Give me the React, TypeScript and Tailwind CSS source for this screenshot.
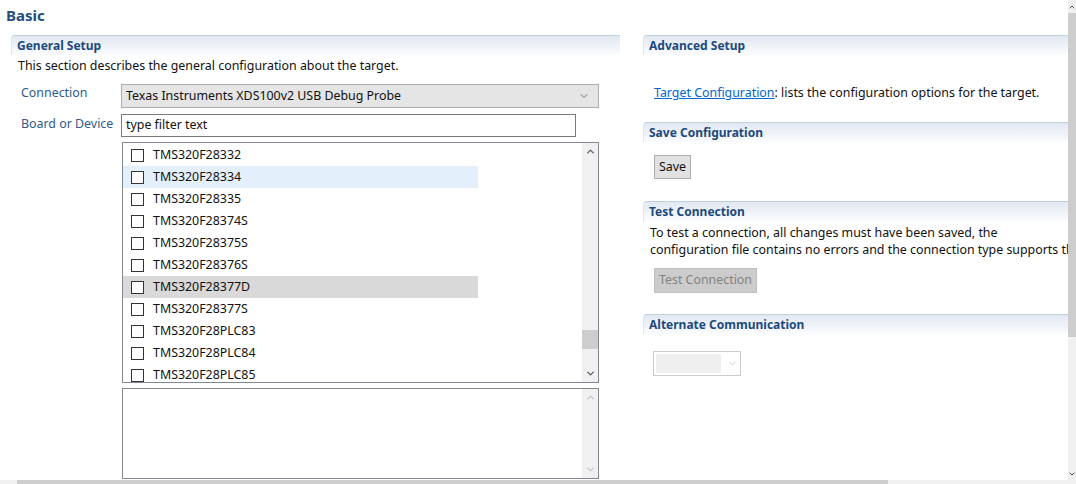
import { ChevronDown, ChevronUp } from 'lucide-react'

const devices = [
  'TMS320F28332',
  'TMS320F28334',
  'TMS320F28335',
  'TMS320F28374S',
  'TMS320F28375S',
  'TMS320F28376S',
  'TMS320F28377D',
  'TMS320F28377S',
  'TMS320F28PLC83',
  'TMS320F28PLC84',
  'TMS320F28PLC85',
]

function SectionHeader({ title }: { title: string }) {
  return (
    <div className="h-[20px] rounded-tl-[4px] border-t border-l border-t-[#c2d0de] border-l-[#dde5ee] bg-linear-to-b from-[#e1e8f2] to-[#fbfcfe] pl-[5px] text-[12px] leading-[19px] font-bold text-[#1c4a7d]">
      {title}
    </div>
  )
}

function ScrollArrow({ dir, muted }: { dir: 'up' | 'down'; muted?: boolean }) {
  const Icon = dir === 'up' ? ChevronUp : ChevronDown
  return (
    <div className="flex h-[17px] items-center justify-center">
      <Icon className={muted ? 'h-[11px] w-[11px] text-[#c4c4c4]' : 'h-[11px] w-[11px] text-[#555]'} strokeWidth={2.6} />
    </div>
  )
}

function DeviceRow({ name, index }: { name: string; index: number }) {
  const bg = index === 1 ? 'bg-[#e3f0fb]' : index === 6 ? 'bg-[#d9d9d9]' : 'bg-white'
  return (
    <div className={`flex h-[22px] w-[355px] shrink-0 items-center ${bg}`}>
      <span className="ml-[8px] h-[13px] w-[13px] shrink-0 border border-[#333] bg-white" />
      <span className="ml-[9px] text-[#111]">{name}</span>
    </div>
  )
}

export default function App() {
  return (
    <div className="flex h-[484px] w-[1076px] flex-col overflow-hidden bg-white font-['Noto_Sans','Liberation_Sans',sans-serif] text-[12.4px] text-[#111]">
      <div className="flex min-h-0 flex-1">
        <main className="min-w-0 flex-1 overflow-hidden">
          <div className="h-[35px] pt-[4px] pl-[6px] text-[15px] leading-[22px] font-bold text-[#1e4e82]">Basic</div>

          <div className="flex gap-[23px] pl-[11px]">
            {/* General Setup */}
            <section className="w-[609px] shrink-0">
              <SectionHeader title="General Setup" />
              <p className="mt-[3px] pl-[7px] leading-[16px]">This section describes the general configuration about the target.</p>

              <div className="mt-[10px] flex items-start">
                <span className="w-[110px] shrink-0 pt-[1px] pl-[10px] leading-[16px] text-[#2f5a8b]">Connection</span>
                <div className="flex h-[24px] w-[478px] items-center justify-between border border-[#adadad] bg-[#e5e5e5] pr-[8px] pl-[4px]">
                  <span>Texas Instruments XDS100v2 USB Debug Probe</span>
                  <ChevronDown className="h-[12px] w-[12px] text-[#555]" strokeWidth={1.5} />
                </div>
              </div>

              <div className="mt-[6px] flex items-start">
                <span className="w-[110px] shrink-0 pt-[2px] pl-[10px] leading-[16px] text-[#2f5a8b]">Board or Device</span>
                <div className="flex h-[23px] w-[455px] items-center border border-[#7a7a7a] pl-[4px]">type filter text</div>
              </div>

              <div className="mt-[5px] ml-[111px] flex h-[241px] w-[477px] border border-[#828790]">
                <div className="flex min-w-0 flex-1 flex-col overflow-hidden pt-[1px]">
                  {devices.map((d, i) => (
                    <DeviceRow key={d} name={d} index={i} />
                  ))}
                </div>
                <div className="flex w-[16px] flex-col bg-[#f0f0f0]">
                  <ScrollArrow dir="up" />
                  <div className="flex-1">
                    <div className="mt-[170px] h-[19px] bg-[#cdcdcd]" />
                  </div>
                  <ScrollArrow dir="down" />
                </div>
              </div>

              <div className="mt-[5px] ml-[111px] flex h-[91px] w-[477px] border border-[#828790]">
                <div className="flex-1" />
                <div className="flex w-[16px] flex-col justify-between bg-[#f0f0f0]">
                  <ScrollArrow dir="up" muted />
                  <ScrollArrow dir="down" muted />
                </div>
              </div>
            </section>

            {/* Right column */}
            <section className="min-w-0 flex-1 overflow-hidden">
              <SectionHeader title="Advanced Setup" />
              <p className="mt-[30px] pl-[11px] leading-[16px] whitespace-nowrap">
                <a className="text-[#0066cc] underline">Target Configuration</a>: lists the configuration options for the target.
              </p>

              <div className="mt-[21px]">
                <SectionHeader title="Save Configuration" />
              </div>
              <button className="mt-[13px] ml-[11px] flex h-[24px] w-[37px] items-center justify-center border border-[#adadad] bg-[#e1e1e1]">
                Save
              </button>

              <div className="mt-[22px]">
                <SectionHeader title="Test Connection" />
              </div>
              <div className="mt-[3px] pl-[7px] leading-[17px] whitespace-nowrap">
                <p>To test a connection, all changes must have been saved, the</p>
                <p>configuration file contains no errors and the connection type supports the test.</p>
              </div>
              <button
                disabled
                className="mt-[10px] ml-[11px] flex h-[25px] w-[103px] items-center justify-center border border-[#bfbfbf] bg-[#cccccc] text-[#838383]"
              >
                Test Connection
              </button>

              <div className="mt-[21px]">
                <SectionHeader title="Alternate Communication" />
              </div>
              <div className="mt-[17px] ml-[10px] flex h-[25px] w-[88px] items-center border border-[#cccccc] bg-white pl-[2px]">
                <div className="h-[19px] w-[65px] bg-[#efefef]" />
                <ChevronDown className="ml-[6px] h-[11px] w-[11px] text-[#b5b5b5]" strokeWidth={1.5} />
              </div>
            </section>
          </div>
        </main>

        {/* window vertical scrollbar */}
        <div className="flex w-[8px] shrink-0 flex-col bg-[#f0f0f0]">
          <div className="flex h-[13px] items-center justify-center">
            <ChevronUp className="h-[8px] w-[8px] text-[#555]" strokeWidth={3} />
          </div>
          <div className="h-[324px] bg-[#cdcdcd]" />
          <div className="flex-1" />
          <div className="flex h-[13px] items-center justify-center">
            <ChevronDown className="h-[8px] w-[8px] text-[#555]" strokeWidth={3} />
          </div>
        </div>
      </div>

      {/* window horizontal scrollbar */}
      <div className="h-[4px] shrink-0 bg-[#f0f0f0]">
        <div className="ml-[17px] h-full w-[871px] bg-[#cdcdcd]" />
      </div>
    </div>
  )
}
